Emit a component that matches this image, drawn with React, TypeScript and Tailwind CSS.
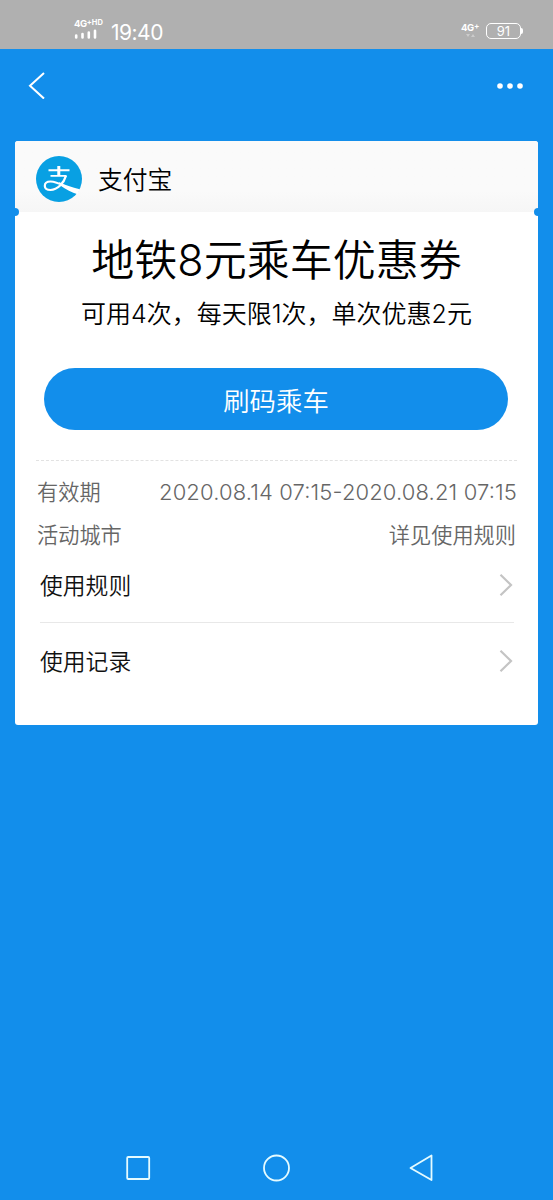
import React from 'react';

const StatusBar: React.FC = () => (
  <header className="flex h-[49px] items-start justify-between bg-[#b0b0b0] pl-[74px] pr-[30px] text-white">
    <div className="flex pt-[19px]">
      <div className="w-[37px]">
        <div className="flex h-[9px] items-start whitespace-nowrap leading-[10px]">
          <span className="text-[9.5px] font-bold tracking-[-0.4px]">4G</span>
          <span className="text-[7.5px] font-bold leading-[7px]">+HD</span>
        </div>
        <svg className="mt-[1px]" width="24" height="11" viewBox="0 0 24 11" fill="none" stroke="white" strokeWidth="2.6" strokeLinecap="round">
          <path d="M2.2 8.5V6.5M8.5 8.5V5M14.8 8.5V3.5M21 8.5V1.8" />
        </svg>
      </div>
      <span className="text-[21px] leading-[27px] tracking-[-0.5px]">19:40</span>
    </div>
    <div className="flex pt-[22px]">
      <div className="flex w-[25px] flex-col">
        <div className="flex h-[9px] items-start leading-[11px]">
          <span className="text-[9.5px] font-bold tracking-[-0.3px]">4G</span>
          <span className="text-[8px] font-bold leading-[8px]">+</span>
        </div>
        <svg className="ml-[5px] mt-[2px] opacity-35" width="9" height="5" viewBox="0 0 9 5" fill="white">
          <path d="M0 1h4L2 4zM5 4h4L7 1z" />
        </svg>
      </div>
      <div className="mt-px flex h-[16px] w-[35px] items-center justify-center rounded-[5px] border-[1.5px] border-white text-[13px] leading-none">
        91
      </div>
      <div className="mt-[6px] h-[6px] w-[2px] rounded-r-sm bg-white" />
    </div>
  </header>
);

const NavBar: React.FC = () => (
  <nav className="flex h-[92px] items-start justify-between pl-[28px] pr-[30px] pt-[22px]">
    <svg width="18" height="28" viewBox="0 0 18 28" fill="none" stroke="white" strokeWidth="2">
      <path d="M16 2L2 14.800l14 12.800" />
    </svg>
    <svg className="mt-[12px]" width="26" height="6" viewBox="0 0 26 6" fill="white">
      <circle cx="3" cy="3" r="2.8" />
      <circle cx="13" cy="3" r="2.8" />
      <circle cx="23" cy="3" r="2.8" />
    </svg>
  </nav>
);

const AlipayLogo: React.FC = () => (
  <svg width="46" height="46" viewBox="0 0 46 46" fill="none" stroke="white">
    <circle cx="23" cy="23" r="23" fill="#08a0e3" stroke="none" />
    <path d="M12.5 14.3h21M14.5 19.9h16" strokeWidth="1.9" />
    <path d="M22.8 10v10" strokeWidth="3" />
    <path d="M30 19.6C28 27 21.5 34 14.5 34c-3.8 0-5.7-1.7-5.7-4.1 0-2.6 2.2-4.4 5.7-4.4 5 0 9.5 2.3 15 5" strokeWidth="2.2" />
    <path d="M23 26c6 3 13 5.600 20.800 7.200l-2.300 5C36 36.500 30 33.500 24 29.300z" fill="white" stroke="none" />
  </svg>
);

const MenuRow: React.FC<{ label: string }> = ({ label }) => (
  <div className="flex h-[75px] items-center justify-between pr-[1px]">
    <span className="pt-[3px] text-[22.8px] font-[350] text-[#111]">{label}</span>
    <svg width="14" height="24" viewBox="0 0 14 24" fill="none" stroke="#c4c4c4" strokeWidth="2.2">
      <path d="M1.5 1.8L12 12 1.5 22.2" />
    </svg>
  </div>
);

const CouponCard: React.FC = () => (
  <main className="relative mx-[15px] h-[584px] overflow-hidden rounded-[3px] bg-white">
    <div className="flex h-[71px] items-center bg-gradient-to-b from-[#fafafa] from-70% to-[#f6f6f6] pl-[21px] pt-[4px]">
      <AlipayLogo />
      <span className="ml-[16px] pt-[4px] text-[24.8px] font-[350] text-black">支付宝</span>
    </div>
    <div className="absolute left-[-4px] top-[67px] size-[8px] rounded-full bg-[#128eeb]" />
    <div className="absolute right-[-4px] top-[67px] size-[8px] rounded-full bg-[#128eeb]" />

    <h1 className="mt-[18px] text-center text-[43px] font-[350] leading-[60px] text-black">地铁8元乘车优惠券</h1>
    <p className="mt-[7px] text-center text-[25px] font-[350] leading-[34px] text-black">可用4次，每天限1次，单次优惠2元</p>
    <button className="mx-[29px] mt-[37px] block h-[62px] w-[464px] rounded-full bg-[#128eeb] pt-[4px] text-[26.4px] font-[350] leading-[58px] text-white">
      刷码乘车
    </button>

    <div className="mx-[21px] mt-[30px] border-t border-dashed border-[#e2e2e2]" />

    <div className="ml-[22px] mr-[21px] mt-[11px] flex h-[42px] items-center justify-between text-[21.2px] font-[350] text-[#666]">
      <span>有效期</span>
      <span className="pb-[2px] text-[22px] tracking-[0.13px] [font-feature-settings:'case']">2020.08.14 07:15-2020.08.21 07:15</span>
    </div>
    <div className="ml-[22px] mr-[22px] flex h-[43px] items-center justify-between text-[21.2px] font-[350] text-[#666]">
      <span>活动城市</span>
      <span>详见使用规则</span>
    </div>

    <div className="ml-[25px] mr-[24px] mt-[-10px]">
      <MenuRow label="使用规则" />
      <div className="h-px bg-[#e8e8e8]" />
      <MenuRow label="使用记录" />
    </div>
  </main>
);

const SystemKeys: React.FC = () => (
  <footer className="mt-auto flex h-[65px] items-center pl-[125px]">
    <svg width="26" height="28" viewBox="0 0 26 28" fill="none" stroke="#e4fbff" strokeWidth="1.8">
      <rect x="2.2" y="3" width="22" height="22" rx="1" />
    </svg>
    <svg className="ml-[111px]" width="28" height="28" viewBox="0 0 28 28" fill="none" stroke="#e4fbff" strokeWidth="1.8">
      <circle cx="14.5" cy="14" r="12.5" />
    </svg>
    <svg className="ml-[118px]" width="26" height="28" viewBox="0 0 26 28" fill="none" stroke="#e4fbff" strokeWidth="1.8" strokeLinejoin="round">
      <path d="M23.5 1.5V26L2.5 14z" />
    </svg>
  </footer>
);

const App: React.FC = () => {
  return (
    <div className="flex h-[1200px] w-[553px] flex-col bg-[#128eeb] font-['Inter','Noto_Sans_CJK_SC',sans-serif]">
      <StatusBar />
      <NavBar />
      <CouponCard />
      <SystemKeys />
    </div>
  );
};

export default App;
